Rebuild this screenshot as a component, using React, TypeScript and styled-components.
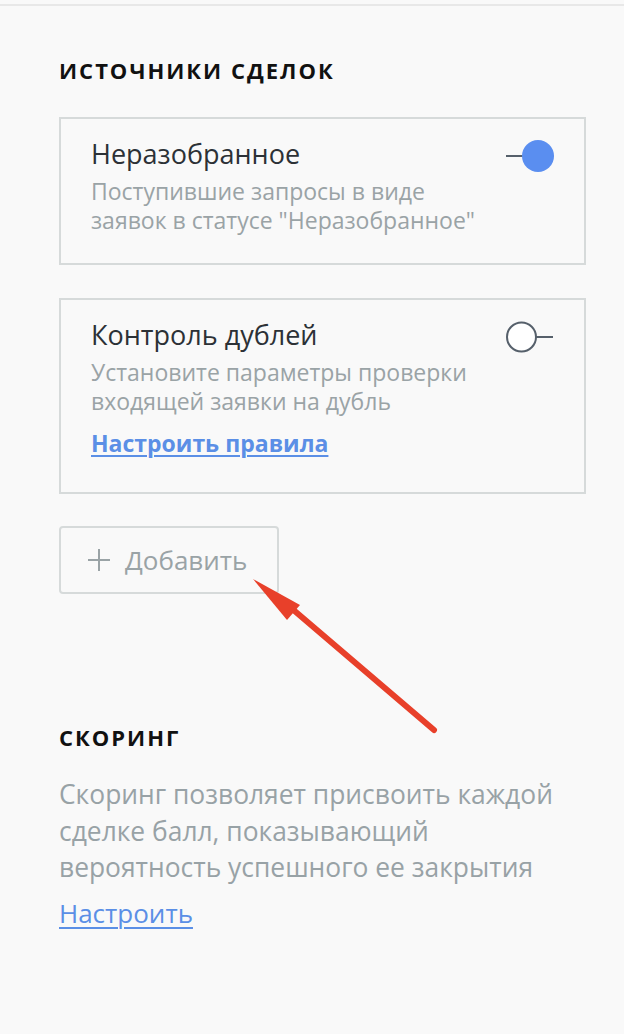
import React from "react";
import styled, { createGlobalStyle } from "styled-components";

const GlobalStyle = createGlobalStyle`
  html, body { margin: 0; padding: 0; background: #f9f9f9; }
  body { font-family: "Open Sans", "Noto Sans", sans-serif; }
  * { box-sizing: border-box; }
`;

const Page = styled.div`
  position: relative;
  width: 624px;
  height: 1034px;
  padding-top: 4px;
  background: #f9f9f9;
  overflow: hidden;
`;

const Content = styled.div`
  border-top: 2px solid #e8e8e8;
  padding: 48px 38px 0 59px;
  display: flex;
  flex-direction: column;
`;

const SectionTitle = styled.h2<{ $mt?: number }>`
  margin: ${(p) => p.$mt ?? 0}px 0 0;
  font-size: 22px;
  line-height: 32px;
  font-weight: 700;
  letter-spacing: 2px;
  color: #111;
`;

const Cards = styled.div`
  margin-top: 31px;
  display: flex;
  flex-direction: column;
  gap: 33px;
`;

const Card = styled.div`
  border: 2px solid #d6dada;
  padding: 16px 30px 28px 30px;
  display: flex;
  justify-content: space-between;
  align-items: flex-start;
`;

const CardBody = styled.div`
  display: flex;
  flex-direction: column;
`;

const CardTitle = styled.div`
  font-size: 27px;
  line-height: 38px;
  color: #2c3136;
`;

const CardText = styled.div`
  margin-top: 4px;
  font-size: 23px;
  line-height: 29px;
  color: #9aa3a6;
  max-width: 395px;
`;

const RuleLink = styled.a`
  margin: 12px 0 6px;
  align-self: flex-start;
  font-size: 23px;
  line-height: 30px;
  font-weight: 700;
  color: #5b8fe6;
  text-decoration: underline;
  text-underline-offset: 3px;
  text-decoration-thickness: 2px;
`;

const ToggleBox = styled.div`
  margin-top: 4px;
  flex: 0 0 auto;
  width: 48px;
  height: 34px;
`;

const AddButton = styled.button`
  margin-top: 32px;
  align-self: flex-start;
  width: 220px;
  height: 68px;
  border: 2px solid #d6dada;
  border-radius: 4px;
  background: transparent;
  display: flex;
  align-items: center;
  gap: 14px;
  padding: 0 0 0 26px;
  font-family: inherit;
  font-size: 26px;
  color: #9aa3a6;
`;

const Description = styled.p`
  margin: 23px 0 0;
  font-size: 26.4px;
  line-height: 36.5px;
  color: #98a2a6;
  max-width: 510px;
`;

const SetupLink = styled.a`
  margin-top: 9px;
  align-self: flex-start;
  font-size: 26px;
  line-height: 36px;
  color: #5b8fe6;
  text-decoration: underline;
  text-underline-offset: 4px;
  text-decoration-thickness: 1.5px;
`;

const ArrowOverlay = styled.svg`
  position: absolute;
  left: 0;
  top: 0;
  pointer-events: none;
`;

const Toggle = ({ on }: { on: boolean }) => (
  <ToggleBox>
    <svg width="48" height="34" viewBox="0 0 48 34">
      {on ? (
        <>
          <line x1="0" y1="17" x2="20" y2="17" stroke="#56606b" strokeWidth="2" />
          <circle cx="32" cy="17" r="16" fill="#5a8ef0" />
        </>
      ) : (
        <>
          <line x1="30" y1="17" x2="47" y2="17" stroke="#56606b" strokeWidth="2" />
          <circle cx="15.5" cy="17" r="14.5" fill="#fff" stroke="#56606b" strokeWidth="2" />
        </>
      )}
    </svg>
  </ToggleBox>
);

export default function App() {
  return (
    <>
      <GlobalStyle />
      <Page>
        <Content>
          <SectionTitle>ИСТОЧНИКИ СДЕЛОК</SectionTitle>
          <Cards>
            <Card>
              <CardBody>
                <CardTitle>Неразобранное</CardTitle>
                <CardText>Поступившие запросы в виде заявок в статусе "Неразобранное"</CardText>
              </CardBody>
              <Toggle on />
            </Card>
            <Card>
              <CardBody>
                <CardTitle>Контроль дублей</CardTitle>
                <CardText>Установите параметры проверки входящей заявки на дубль</CardText>
                <RuleLink href="#">Настроить правила</RuleLink>
              </CardBody>
              <Toggle on={false} />
            </Card>
          </Cards>
          <AddButton>
            <svg width="24" height="24" viewBox="0 0 24 24">
              <path d="M12 1v22M1 12h22" stroke="#9aa3a6" strokeWidth="2" />
            </svg>
            Добавить
          </AddButton>
          <SectionTitle $mt={127}>СКОРИНГ</SectionTitle>
          <Description>
            Скоринг позволяет присвоить каждой сделке балл, показывающий вероятность успешного ее закрытия
          </Description>
          <SetupLink href="#">Настроить</SetupLink>
        </Content>
        <ArrowOverlay width="624" height="1034" viewBox="0 0 624 1034">
          <line x1="434" y1="730" x2="290" y2="607" stroke="#e8402a" strokeWidth="6" strokeLinecap="round" />
          <polygon points="253,579 300,605 287,620" fill="#e8402a" />
        </ArrowOverlay>
      </Page>
    </>
  );
}
